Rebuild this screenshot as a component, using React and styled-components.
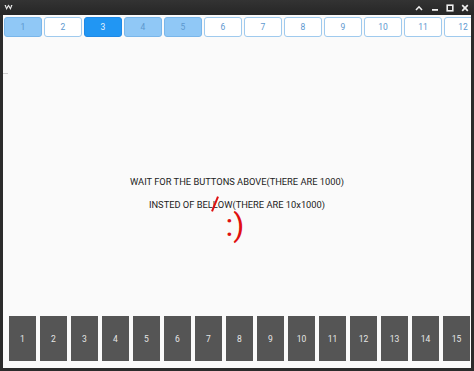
import React from "react";
import styled, { createGlobalStyle } from "styled-components";

const Global = createGlobalStyle`
  html, body { margin: 0; padding: 0; background: #2b2b2b; }
  body { font-family: Roboto, "Liberation Sans", sans-serif; }
`;

const Window = styled.div`
  width: 474px;
  height: 371px;
  display: flex;
  flex-direction: column;
  background: #2b2b2b;
  overflow: hidden;
`;

const TitleBar = styled.div`
  height: 15px;
  flex: none;
  display: flex;
  align-items: center;
  justify-content: space-between;
  padding: 0 5px 0 4px;
  background: linear-gradient(#333, #262626);
`;

const Controls = styled.div`
  display: flex;
  align-items: center;
  gap: 5px;
  svg { display: block; }
`;

const Content = styled.div`
  flex: 1;
  margin: 0 3px 3px 3px;
  background: #fafafa;
  display: flex;
  flex-direction: column;
  min-height: 0;
  position: relative;
`;

const TopRow = styled.div`
  display: flex;
  gap: 2px;
  padding: 2px 0 0 1px;
  overflow: hidden;
  flex: none;
`;

const TopButton = styled.div`
  flex: none;
  width: 38px;
  height: 20px;
  box-sizing: border-box;
  border-radius: 3px;
  display: flex;
  align-items: center;
  justify-content: center;
  font-size: 8.5px;
  border: 1px solid ${p => (p.$kind === "active" ? "#1e88e5" : p.$kind === "hl" ? "#79b6ea" : "#9fcaee")};
  background: ${p => (p.$kind === "active" ? "#2196f3" : p.$kind === "hl" ? "#90c8f6" : "#ffffff")};
  color: ${p => (p.$kind === "active" ? "#e8f3fd" : "#5d98cf")};
`;

const Middle = styled.div`
  flex: 1;
  display: flex;
  flex-direction: column;
  align-items: center;
  padding-top: 139px;
  color: #222;
  font-size: 9.3px;
`;

const Line = styled.div`
  line-height: 12px;
  margin-bottom: ${p => p.$mb || 0}px;
  position: relative;
  white-space: nowrap;
`;

const Strike = styled.span`
  position: relative;
  &::after {
    content: "";
    position: absolute;
    left: 50%;
    top: -3px;
    width: 2px;
    height: 16px;
    background: #e01010;
    transform: translateX(-50%) rotate(22deg);
  }
`;

const Smiley = styled.div`
  color: #e01010;
  font-size: 32px;
  line-height: 36px;
  margin-top: -4px;
  margin-left: -4px;
`;

const BottomRow = styled.div`
  display: flex;
  gap: 4px;
  padding: 0 0 7px 6px;
  flex: none;
`;

const BottomButton = styled.div`
  flex: none;
  width: 27px;
  height: 45px;
  background: #555555;
  color: #e6e6e6;
  font-size: 8.5px;
  display: flex;
  align-items: center;
  justify-content: center;
`;

const EdgeMark = styled.div`
  position: absolute;
  left: 0;
  top: 58px;
  width: 5px;
  height: 1px;
  background: #cfcfcf;
`;

const highlighted = { 1: "hl", 3: "active", 4: "hl", 5: "hl" };

export default function App() {
  const top = Array.from({ length: 12 }, (_, i) => i + 1);
  const bottom = Array.from({ length: 15 }, (_, i) => i + 1);
  return (
    <Window>
      <Global />
      <TitleBar>
        <svg width="9" height="7" viewBox="0 0 9 7">
          <path d="M0.5 1 L2.5 6 L4.5 2.5 L6.5 6 L8.5 1 L7 1 L6.5 3.5 L4.5 0.5 L2.5 3.5 L2 1 Z" fill="#e8e8e8" />
        </svg>
        <Controls>
          <svg width="8" height="6" viewBox="0 0 8 6">
            <path d="M1 5 L4 1.8 L7 5" stroke="#eee" strokeWidth="1.6" fill="none" />
          </svg>
          <svg width="8" height="6" viewBox="0 0 8 6" style={{ marginLeft: 3 }}>
            <rect x="1" y="4" width="6" height="1.8" fill="#eee" />
          </svg>
          <svg width="8" height="8" viewBox="0 0 8 8" style={{ marginLeft: 2 }}>
            <rect x="1.2" y="1.2" width="5.6" height="5.6" stroke="#eee" strokeWidth="1.6" fill="none" />
          </svg>
          <svg width="8" height="8" viewBox="0 0 8 8" style={{ marginLeft: 2 }}>
            <path d="M1.2 1.2 L6.8 6.8 M6.8 1.2 L1.2 6.8" stroke="#eee" strokeWidth="1.7" />
          </svg>
        </Controls>
      </TitleBar>
      <Content>
        <EdgeMark />
        <TopRow>
          {top.map(n => (
            <TopButton key={n} $kind={highlighted[n] || "normal"}>{n}</TopButton>
          ))}
        </TopRow>
        <Middle>
          <Line $mb={11}>WAIT FOR THE BUTTONS ABOVE(THERE ARE 1000)</Line>
          <Line>INSTED OF BE<span>L</span><Strike>L</Strike>OW(THERE ARE 10x1000)</Line>
          <Smiley>:)</Smiley>
        </Middle>
        <BottomRow>
          {bottom.map(n => (
            <BottomButton key={n}>{n}</BottomButton>
          ))}
        </BottomRow>
      </Content>
    </Window>
  );
}
